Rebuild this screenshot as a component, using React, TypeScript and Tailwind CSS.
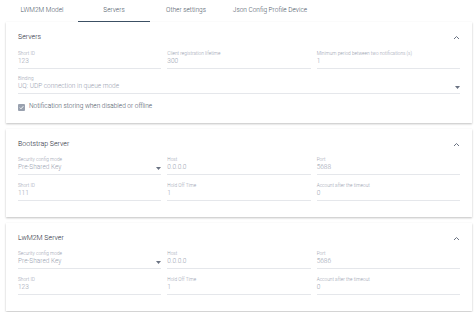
import React from 'react';

const Chevron = () => (
  <svg width="7" height="5" viewBox="0 0 7 5" className="text-gray-500">
    <path d="M1 4 L3.5 1.5 L6 4" fill="none" stroke="currentColor" strokeWidth="1" />
  </svg>
);

const Caret = () => (
  <svg width="5" height="3" viewBox="0 0 5 3" className="text-gray-500">
    <path d="M0 0 L5 0 L2.5 3 Z" fill="currentColor" />
  </svg>
);

type FieldProps = { label: string; value: string; select?: boolean; className?: string };

const Field: React.FC<FieldProps> = ({ label, value, select, className }) => (
  <div className={`flex flex-col ${className ?? ''}`}>
    <span className="text-[4.75px] leading-[6px] font-light text-gray-400">{label}</span>
    <div className="flex items-center justify-between border-b border-gray-200 h-[12px] pb-[1px]">
      <span className="text-[6.5px] font-light text-gray-400">{value}</span>
      {select && <Caret />}
    </div>
  </div>
);

const CardHeader: React.FC<{ title: string; mb: string }> = ({ title, mb }) => (
  <div className={`flex items-center justify-between h-[14px] ${mb}`}>
    <span className="text-[7px] font-light text-gray-800">{title}</span>
    <Chevron />
  </div>
);

const ServerCard: React.FC<{ title: string; shortId: string; port: string }> = ({ title, shortId, port }) => (
  <div className="bg-white shadow-[0_1px_2px_rgba(0,0,0,0.25)] px-[12px] pt-[8px] pb-[16px]">
    <CardHeader title={title} mb="mb-[6px]" />
    <div className="grid grid-cols-3 gap-x-[6px] gap-y-[8px]">
      <Field label="Security config mode" value="Pre-Shared Key" select />
      <Field label="Host" value="0.0.0.0" />
      <Field label="Port" value={port} />
      <Field label="Short ID" value={shortId} />
      <Field label="Hold Off Time" value="1" />
      <Field label="Account after the timeout" value="0" />
    </div>
  </div>
);

export default function App() {
  const tabs = ['LWM2M Model', 'Servers', 'Other settings', 'Json Config Profile Device'];
  return (
    <div className="w-[474px] h-[312px] overflow-hidden bg-white" style={{ fontFamily: 'Roboto, sans-serif' }}>
      <div className="flex h-[22px] pl-[6px]">
        {tabs.map((t, i) => (
          <div
            key={t}
            className={`flex items-center justify-center text-[6.5px] font-light text-gray-600 ${i === 3 ? 'w-[96px]' : 'w-[72px]'} ${i === 1 ? 'border-b-[1.5px] border-[#3d5266]' : ''}`}
          >
            {t}
          </div>
        ))}
      </div>
      <div className="flex flex-col gap-[6px] pl-[6px] pr-[2px]">
        <div className="bg-white shadow-[0_1px_2px_rgba(0,0,0,0.25)] px-[12px] pt-[8px] pb-[12px]">
          <CardHeader title="Servers" mb="mb-[7px]" />
          <div className="grid grid-cols-3 gap-x-[6px]">
            <Field label="Short ID" value="123" />
            <Field label="Client registration lifetime" value="300" />
            <Field label="Minimum period between two notifications (s)" value="1" />
          </div>
          <Field className="mt-[7px]" label="Binding" value="UQ: UDP connection in queue mode" select />
          <div className="flex items-center gap-[4px] mt-[9px] h-[8px]">
            <div className="w-[7px] h-[7px] bg-gray-400 rounded-[1px] flex items-center justify-center">
              <svg width="5" height="5" viewBox="0 0 5 5">
                <path d="M0.8 2.6 L2 3.8 L4.3 1.2" fill="none" stroke="white" strokeWidth="0.9" />
              </svg>
            </div>
            <span className="text-[6.5px] font-light text-gray-600">Notification storing when disabled or offline</span>
          </div>
        </div>
        <ServerCard title="Bootstrap Server" shortId="111" port="5688" />
        <ServerCard title="LwM2M Server" shortId="123" port="5686" />
      </div>
    </div>
  );
}
